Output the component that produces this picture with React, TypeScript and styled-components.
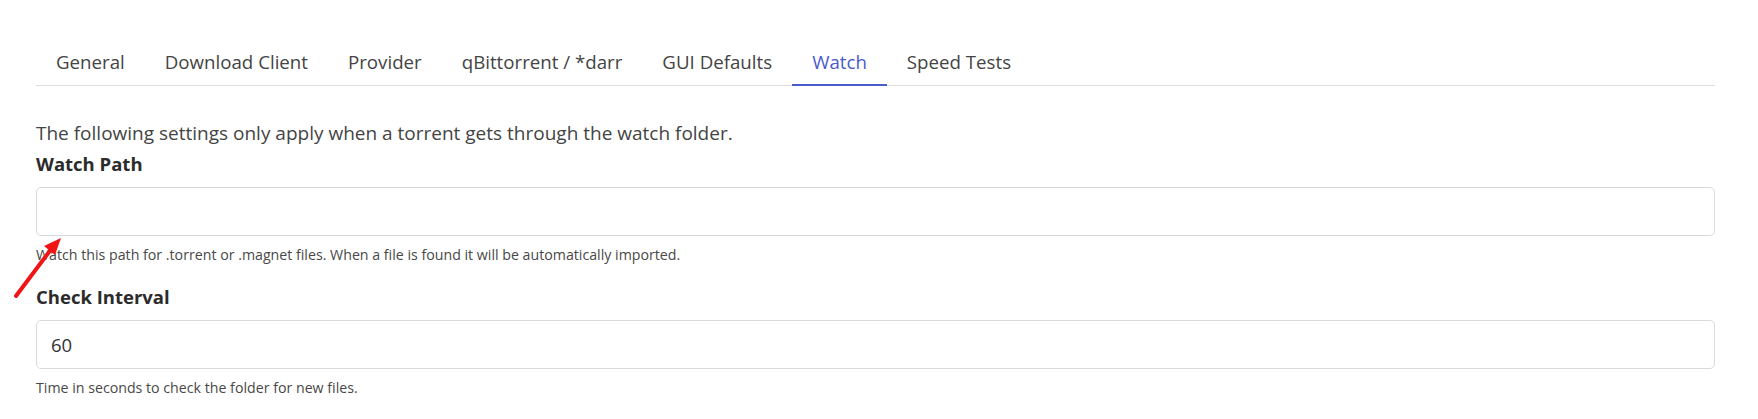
import styled, { createGlobalStyle } from 'styled-components';

const GlobalStyle = createGlobalStyle`
  body {
    margin: 0;
    background: #ffffff;
    font-family: 'Open Sans', 'Noto Sans', sans-serif;
    color: #333333;
  }
`;

const Page = styled.div`
  position: relative;
  padding: 38px 43px 0 36px;
`;

const TabBar = styled.nav`
  display: flex;
  border-bottom: 1px solid #dcdcdc;
`;

const Tab = styled.a<{ $active?: boolean }>`
  display: flex;
  align-items: center;
  height: 48px;
  padding: 0 20px;
  margin-bottom: -1px;
  font-size: 18.7px;
  color: ${({ $active }) => ($active ? '#4c5bc9' : '#444444')};
  border-bottom: 2px solid ${({ $active }) => ($active ? '#4c5bc9' : 'transparent')};
  box-sizing: border-box;
  cursor: pointer;
  white-space: nowrap;
`;

const Intro = styled.p`
  margin: 34px 0 0;
  font-size: 19px;
  line-height: 27px;
  color: #444444;
`;

const Field = styled.div<{ $first?: boolean }>`
  margin-top: ${({ $first }) => ($first ? '3px' : '18px')};
`;

const Label = styled.label`
  display: block;
  font-size: 18.5px;
  line-height: 27px;
  font-weight: 700;
  color: #2b2b2b;
  margin-bottom: 10px;
`;

const Input = styled.input`
  display: block;
  box-sizing: border-box;
  width: 100%;
  height: 49px;
  padding: 0 14px;
  font-family: inherit;
  font-size: 18.5px;
  color: #333333;
  border: 1px solid #dadada;
  border-radius: 5px;
  background: #ffffff;
  outline: none;
`;

const Help = styled.small`
  display: block;
  margin-top: 8px;
  font-size: 14.2px;
  line-height: 21px;
  color: #484848;
`;

const Annotation = styled.svg`
  position: absolute;
  left: 8px;
  top: 228px;
  pointer-events: none;
`;

const tabs = [
  'General',
  'Download Client',
  'Provider',
  'qBittorrent / *darr',
  'GUI Defaults',
  'Watch',
  'Speed Tests',
];

export default function App() {
  return (
    <>
      <GlobalStyle />
      <Page>
        <TabBar>
          {tabs.map((t) => (
            <Tab key={t} $active={t === 'Watch'}>
              {t}
            </Tab>
          ))}
        </TabBar>
        <Intro>The following settings only apply when a torrent gets through the watch folder.</Intro>
        <Field $first>
          <Label>Watch Path</Label>
          <Input type='text' defaultValue='' />
          <Help>
            Watch this path for .torrent or .magnet files. When a file is found it will be
            automatically imported.
          </Help>
        </Field>
        <Field>
          <Label>Check Interval</Label>
          <Input type='text' defaultValue='60' />
          <Help>Time in seconds to check the folder for new files.</Help>
        </Field>
        <Annotation width='70' height='80' viewBox='0 0 70 80'>
          <line x1='8' y1='68' x2='44' y2='20' stroke='#f01414' strokeWidth='4' strokeLinecap='round' />
          <polygon points='53,10 36,18 47,27' fill='#f01414' />
        </Annotation>
      </Page>
    </>
  );
}
